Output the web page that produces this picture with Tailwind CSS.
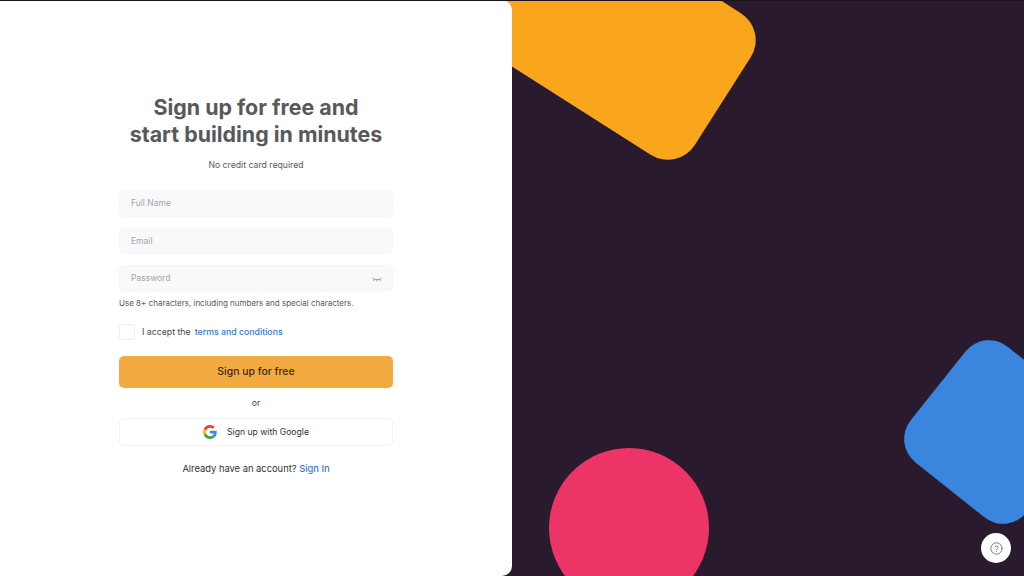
<!DOCTYPE html>
<html lang="en">
  <head>
    <meta charset="UTF-8" />
    <meta name="viewport" content="width=device-width, initial-scale=1.0" />
    <script src="https://cdn.jsdelivr.net/npm/@tailwindcss/browser@4"></script>
    <title>Sign up</title>
  </head>
  <body class="bg-[#2a1a2e] font-['Inter',sans-serif] h-[576px] overflow-hidden">
    <div class="relative flex h-[576px] w-[1024px] overflow-hidden">
      <!-- BACKGROUND SHAPES -->
      <div class="absolute left-[355px] top-[-90.5px] h-[168px] w-[399px] rotate-[32.5deg] rounded-[32px] bg-[#f9a61d]"></div>
      <div class="absolute left-[922px] top-[357.5px] h-[148px] w-[148px] rotate-[38.5deg] rounded-[30px] bg-[#3a86de]"></div>
      <div class="absolute left-[549px] top-[448px] h-40 w-40 rounded-full bg-[#ec3566]"></div>

      <!-- FORM PANEL -->
      <div class="relative z-10 flex h-full w-[512px] flex-col items-center rounded-r-[10px] bg-white pt-[94px]">
        <h1 class="text-center text-[21.4px] leading-[27px] font-bold text-[#58595c]">Sign up for free and<br />start building in minutes</h1>
        <p class="mt-[10px] text-[8.7px] leading-[14px] text-[#58595c]">No credit card required</p>

        <form class="mt-[18px] flex w-[274px] flex-col">
          <div class="flex h-[27px] items-center rounded-[5px] border border-[#f6f6f8] bg-[#f9f9fb] px-[11px] text-[8.5px] text-[#a3a5a9]">Full Name</div>
          <div class="mt-[11px] flex h-[26px] items-center rounded-[5px] border border-[#f6f6f8] bg-[#f9f9fb] px-[11px] text-[8.5px] text-[#a3a5a9]">Email</div>
          <div class="mt-[11px] flex h-[26px] items-center justify-between rounded-[5px] border border-[#f6f6f8] bg-[#f9f9fb] px-[11px] text-[8.5px] text-[#a3a5a9]">
            <span>Password</span>
            <svg class="mt-[2px] -mr-[1px] h-[5px] w-[10px]" viewBox="0 0 10 5" fill="none" stroke="#85888c" stroke-width="0.8" stroke-linecap="round">
              <path d="M0.8 1.2C3 3.2 7 3.2 9.2 1.2M2.2 2.4L1.6 3.6M5 3L5 4.3M7.8 2.4L8.4 3.6" />
            </svg>
          </div>
          <p class="mt-[6px] text-[8px] leading-[12px] text-[#58595c]">Use 8+ characters, including numbers and special characters.</p>

          <div class="mt-[15px] flex items-center text-[8.75px] leading-[12px]">
            <span class="h-4 w-4 rounded-[3px] border border-[#eceef0] bg-white"></span>
            <span class="ml-[7px] text-[#44474a]">I accept the</span>
            <a class="ml-[4px] font-medium text-[#3a78c9]">terms and conditions</a>
          </div>

          <button type="button" class="mt-4 h-8 rounded-[5px] bg-[#f2aa41] text-[10.45px] font-medium text-[#3a2a1a]">Sign up for free</button>
          <p class="mt-[9px] text-center text-[8.7px] leading-[12px] text-[#44474a]">or</p>
          <button type="button" class="mt-[9px] flex h-7 items-center justify-center rounded-[5px] border border-[#f2f3f5] bg-white text-[8.65px] text-[#2f3235]">
            <svg class="mr-[10px] h-[14px] w-[14px]" viewBox="0 0 48 48">
              <path fill="#EA4335" d="M24 9.5c3.54 0 6.71 1.22 9.21 3.6l6.85-6.85C35.9 2.38 30.47 0 24 0 14.62 0 6.51 5.38 2.56 13.22l7.98 6.19C12.43 13.72 17.74 9.5 24 9.5z" />
              <path fill="#4285F4" d="M46.98 24.55c0-1.57-.15-3.09-.38-4.55H24v9.02h12.94c-.58 2.96-2.26 5.48-4.78 7.18l7.73 6c4.51-4.18 7.09-10.36 7.09-17.65z" />
              <path fill="#FBBC05" d="M10.53 28.59c-.48-1.45-.76-2.99-.76-4.59s.27-3.14.76-4.59l-7.98-6.19C.92 16.46 0 20.12 0 24c0 3.88.92 7.54 2.56 10.78l7.97-6.19z" />
              <path fill="#34A853" d="M24 48c6.48 0 11.93-2.13 15.89-5.81l-7.73-6c-2.15 1.45-4.92 2.3-8.16 2.3-6.26 0-11.57-4.22-13.47-9.91l-7.98 6.19C6.51 42.62 14.62 48 24 48z" />
            </svg>
            <span>Sign up with Google</span>
          </button>
          <p class="mt-4 text-center text-[9.35px] leading-[14px] text-[#2f3235]">Already have an account? <a class="font-medium text-[#3a78c9]">Sign In</a></p>
        </form>
      </div>

      <!-- HELP BUTTON -->
      <button type="button" class="absolute left-[981px] top-[533px] z-20 flex h-[30px] w-[30px] items-center justify-center rounded-full bg-white">
        <svg class="h-[13px] w-[13px]" viewBox="0 0 24 24" fill="none" stroke="#707377" stroke-width="1.8" stroke-linecap="round">
          <circle cx="12" cy="12" r="10.5" />
          <path d="M9 9.2a3 3 0 0 1 5.8 1c0 2-2.8 2.4-2.8 4" />
          <path d="M12 17.6v.1" />
        </svg>
      </button>

      <!-- TOP EDGE -->
      <div class="absolute inset-x-0 top-0 z-30 h-px bg-[#1a1418]"></div>
    </div>
  </body>
</html>
